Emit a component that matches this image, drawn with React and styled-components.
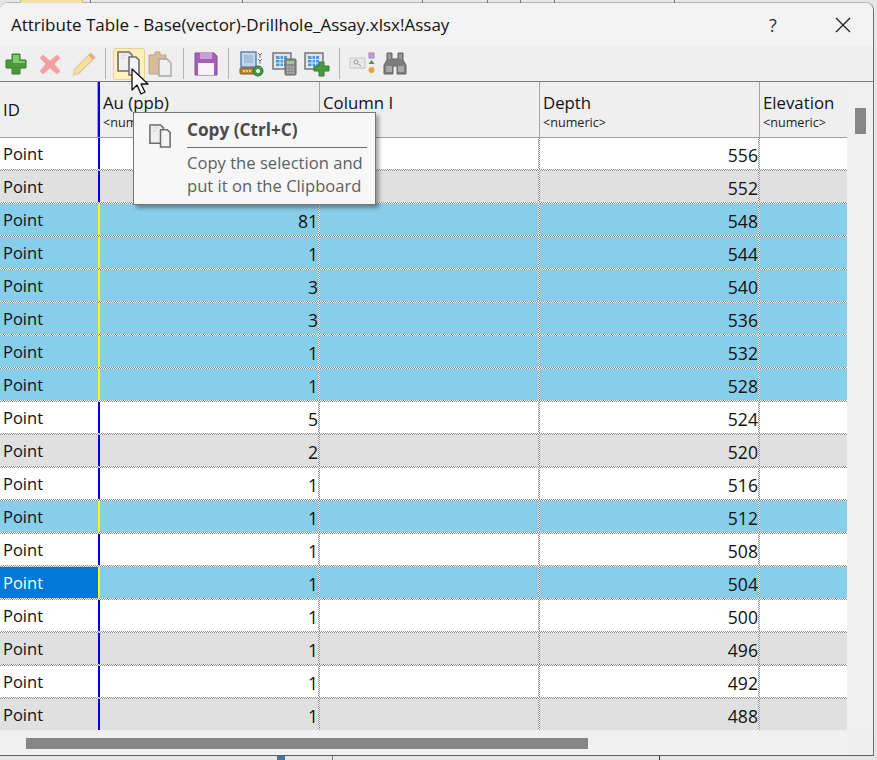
import React from "react";
import styled, { createGlobalStyle } from "styled-components";

const Global = createGlobalStyle`
  html, body { margin: 0; padding: 0; background: #e6e6e6; }
  #root { width: 877px; height: 760px; overflow: hidden; }
`;
const FONT = `"Open Sans", "Noto Sans", sans-serif`;
const CHECK = `repeating-conic-gradient(#8c8c8c 0 25%, #fff 0 50%) 0 0 / 2px 2px`;

const Stage = styled.div`
  position: relative; width: 877px; height: 760px; overflow: hidden;
  padding: 3px 3px 4px 0; box-sizing: border-box;
  font-family: ${FONT}; background: #e6e6e6;
`;
const Win = styled.div`
  position: relative; height: 100%; display: flex; flex-direction: column; box-sizing: border-box;
  border-right: 1px solid #707070; border-bottom: 1px solid #5f5f5f;
  border-top-right-radius: 8px; border-top-left-radius: 8px; background: #efefef; overflow: hidden;
`;
const WinHalo = styled.div`
  height: 100%; border-top-left-radius: 8px; border-top-right-radius: 8px; box-shadow: 0 -1px 0 #b4b4b4;
`;
const Title = styled.div`
  height: 43px; display: flex; align-items: center; background: #f3f3f3; padding-left: 11px;
  font-size: 17px; color: #111; flex: none;
`;
const TitleText = styled.div` flex: 1; white-space: nowrap; `;
const Help = styled.div` width: 18px; margin-right: 48px; font-size: 18px; color: #333; `;
const Close = styled.svg` width: 16px; height: 16px; margin-right: 22px; `;
const Toolbar = styled.div`
  height: 35px; display: flex; align-items: center; background: #efefef; flex: none;
`;
const Tool = styled.div`
  width: 32px; height: 32px; margin-right: ${p => p.$gap ?? 0}px; display: flex; align-items: center; justify-content: center;
  box-sizing: border-box; border-radius: 3px; flex: none;
  ${p => p.$active && `background: linear-gradient(#fdeeb8, #fff2c4); border: 1px solid #ecd184;`}
  svg { filter: blur(.35px); }
`;
const Sep = styled.div` width: 1px; height: 31px; background: #b4b4b4; flex: none; margin: 0 ${p => p.$r}px 0 ${p => p.$l}px; `;
const Body = styled.div`
  flex: 1; min-height: 0; display: grid; grid-template-columns: 847px 26px; grid-template-rows: 648px 1fr;
  border-top: 1px solid #7d7d7d;
`;
const Table = styled.div` overflow: hidden; background: #fff; `;
const COLS = `98px 2px 220px 220px 220px 87px`;
const Head = styled.div`
  height: 56px; display: grid; grid-template-columns: ${COLS}; background: #efefef;
  border-bottom: 1px solid #a0a0a0; box-sizing: border-box;
`;
const HeadCell = styled.div`
  box-sizing: border-box; padding: 10px 0 0 3px; border-right: ${p => p.$last ? "none" : "1px solid #a4a4a4"};
  overflow: hidden; white-space: nowrap; color: #111; font-size: 16.8px; line-height: 22px;
  ${p => p.$center && `display: flex; align-items: center; padding-top: 0;`}
`;
const Sub = styled.div` font-size: 12.6px; line-height: 16px; margin-top: 1px; color: #222; `;
const BlueBar = styled.div` background: #0000e0; `;
const Row = styled.div`
  height: 33px; box-sizing: border-box; display: grid; grid-template-columns: ${COLS};
  background: ${p => p.$sel ? "#87ceeb" : p.$odd ? "#e0e0e0" : "#fff"};
  position: relative; color: #111; font-size: 16.5px;
  &::after {
    content: ""; position: absolute; left: 0; right: 0; bottom: 0; height: 2px;
    background: ${CHECK};
  }
`;
const IdCell = styled.div`
  padding: 5px 0 0 3px; line-height: 22px;
  ${p => p.$cur && `background: #0078d7; color: #fff;`}
`;
const Mark = styled.div` background: ${p => p.$sel ? "#ffff00" : "#0000e0"}; `;
const Num = styled.div`
  position: relative; box-sizing: border-box; text-align: right; padding: 6px 2px 0 0; line-height: 23px; font-size: 17.6px;
  &::after { content: ""; position: absolute; right: 0; top: 0; bottom: 0; width: 2px; background: ${CHECK}; }
`;
const VBar = styled.div` background: #f0f0f0; padding: 26px 0 0 8px; box-sizing: border-box; `;
const VThumb = styled.div` width: 11px; height: 26px; background: #868686; `;
const HBar = styled.div` background: #f0f0f0; padding: 8px 0 0 26px; `;
const HThumb = styled.div` width: 562px; height: 11px; background: #868686; `;
const Corner = styled.div` background: #efefef; `;
const Tip = styled.div`
  position: absolute; left: 133px; top: 112px; width: 243px; height: 93px; box-sizing: border-box;
  background: #f7f7f7; border: 1px solid #767676; box-shadow: 3px 3px 4px rgba(0,0,0,.35);
  display: grid; grid-template-columns: 53px 1fr; padding: 0 8px 0 0; color: #5f5f5f;
`;
const TipIcon = styled.div` padding: 11px 0 0 14px; svg { filter: blur(.3px); } `;
const TipTitle = styled.div`
  font-weight: 700; font-size: 17.2px; line-height: 22px; padding: 6px 0 6px; border-bottom: 1px solid #6e6e6e; color: #4b4b4b; white-space: nowrap;
`;
const TipText = styled.div` font-size: 16.6px; line-height: 23px; padding-top: 3px; white-space: nowrap; `;
const Cursor = styled.svg` position: absolute; left: 130px; top: 68px; width: 20px; height: 28px; `;
const TopTab = styled.div` position: absolute; left: 20px; top: 0; width: 63px; height: 3px; box-sizing: border-box; background: #f0e2a8; border: solid #cdbb74; border-width: 0 1px; `;
const Tick = styled.div`
  position: absolute; left: ${p => p.$x}px; ${p => p.$bottom ? "bottom: 0;" : "top: 0;"} width: ${p => p.$w ?? 1}px; height: ${p => p.$bottom ? 4 : 3}px; background: ${p => p.$c ?? "#777"};
`;

const Plus = () => (
  <svg width="24" height="24" viewBox="0 0 24 24"><path d="M8 2h8v6h6v8h-6v6H8v-6H2V8h6z" fill="#4a9a3c" stroke="#3a7a34" strokeWidth="1" /><path d="M9 3h6v6h6v2H9z" fill="#7fc96e" /></svg>
);
const XIcon = () => (
  <svg width="24" height="24" viewBox="0 0 24 24"><path d="M5 3l7 6 7-6 3 3-6 6 6 7-3 3-7-6-7 6-3-3 6-7-6-6z" fill="#f5a0a0" stroke="#f0b0b0" /></svg>
);
const Pencil = () => (
  <svg width="26" height="26" viewBox="0 0 24 24"><path d="M18 2l4 4L7 21l-5 1 1-5z" fill="#f5e09c" stroke="#d2c49a" /><path d="M18 2l4 4-2 2-4-4z" fill="#eba884" /><path d="M3 17l4 4-5 1z" fill="#e8d6b4" /></svg>
);
const Sheets = ({ size = 26 }) => (
  <svg width={size} height={size} viewBox="0 0 26 26">
    <path d="M2 1h11l3 3v16H2z" fill="#efefef" stroke="#6d6d6d" strokeWidth="1.6" />
    <path d="M13 6h7l3 3v15H13z" fill="#f4f4f4" stroke="#6d6d6d" strokeWidth="1.6" />
    <path d="M5 4h6M5 7h4" stroke="#cfcfcf" />
  </svg>
);
const Paste = () => (
  <svg width="26" height="26" viewBox="0 0 26 26">
    <path d="M1 4h6V1h5v3h6v19H1z" fill="#d8bd98" stroke="#bda785" />
    <path d="M11 8h8l4 4v13H11z" fill="#efefef" stroke="#a8a8a8" strokeWidth="1.4" />
  </svg>
);
const Save = () => (
  <svg width="24" height="24" viewBox="0 0 24 24">
    <path d="M1 1h19l3 3v19H1z" fill="#a261b4" stroke="#8a4d9c" />
    <rect x="6" y="1" width="12" height="6" fill="#c9a0d4" />
    <rect x="4" y="11" width="16" height="12" fill="#f8f2fa" />
  </svg>
);
const XyTool = () => (
  <svg width="26" height="26" viewBox="0 0 26 26">
    <rect x="2" y="1" width="15" height="15" fill="#c6d6ea" stroke="#5a86b8" strokeWidth="1.5" />
    <rect x="5" y="4" width="9" height="8" fill="#a6bfe0" />
    <rect x="1" y="17" width="16" height="6" rx="1" fill="#b98a34" stroke="#7d5c20" />
    <path d="M4 20h9" stroke="#f1e3b8" strokeDasharray="2 1" strokeWidth="1.5" />
    <circle cx="19" cy="20" r="5" fill="#3f9a4a" stroke="#2c7035" />
    <circle cx="19" cy="20" r="2" fill="#fff" />
    <path d="M19 2l2 2 2-2M21 4v3M19 8l2 2 2-2M21 10v3" stroke="#777" fill="none" />
  </svg>
);
const Grid = () => (
  <g>
    <rect x="1" y="2" width="18" height="16" fill="#e4e4e4" stroke="#777" strokeWidth="1.5" />
    <rect x="4" y="5" width="11" height="10" fill="#4d9bd8" />
    <path d="M4 8.500h11M4 12h11M8 5v10M11.500 5v10" stroke="#d9ebf7" />
  </g>
);
const Calc = () => (
  <svg width="26" height="26" viewBox="0 0 26 26">
    <Grid />
    <rect x="13" y="8" width="11" height="16" rx="1" fill="#8a8a8a" stroke="#666" />
    <rect x="15" y="10" width="7" height="3" fill="#8fd08f" />
    <path d="M15 16h7M15 19h7M15 22h7" stroke="#ddd" strokeDasharray="1.500 1.200" />
  </svg>
);
const AddGrid = () => (
  <svg width="26" height="26" viewBox="0 0 26 26">
    <Grid />
    <path d="M15 11h5v4h5v5h-5v5h-5v-5h-5v-5h5z" fill="#4a9a3c" stroke="#3a7a34" />
  </svg>
);
const Query = () => (
  <svg width="26" height="26" viewBox="0 0 26 26">
    <path d="M1 7h15v10H1z" fill="#e8e8e8" stroke="#c4c4c4" />
    <circle cx="7" cy="11" r="2" fill="none" stroke="#999" />
    <path d="M9 13l3 2" stroke="#999" />
    <rect x="20" y="2" width="5" height="5" fill="#c29ce0" stroke="#a880c8" />
    <path d="M22.500 9l3 4h-6z" fill="#4a9a3c" />
    <circle cx="22.500" cy="19" r="3" fill="#eda03c" />
  </svg>
);
const Binoc = () => (
  <svg width="26" height="26" viewBox="0 0 26 26">
    <path d="M5 2h5v6h6V2h5v7l3 5v9h-9v-8h-4v8H2v-9l3-5z" fill="#7d7d7d" stroke="#666" />
    <path d="M4 15h6v6H4zM16 15h6v6h-6z" fill="#a8a8a8" />
    <path d="M6 3h3v5H6zM17 3h3v5h-3z" fill="#9a9a9a" />
  </svg>
);

const depths = [556,552,548,544,540,536,532,528,524,520,516,512,508,504,500,496,492,488];
const aus = ["", "", 81,1,3,3,1,1,5,2,1,1,1,1,1,1,1,1];
const selected = new Set([2,3,4,5,6,7,11,13]);
const odd = new Set([1,9,15,17]);
const topTicks = [90, 242, 422, 487, 520, 554, 674];

export default function App() {
  return (
    <Stage>
      <Global />
      <TopTab />
      {topTicks.map(x => <Tick key={x} $x={x} />)}
      <Tick $bottom $x={277} $w={8} $c="#3a78b0" />
      <Tick $bottom $x={332} />
      <Tick $bottom $x={659} $c="#333" />
      <WinHalo>
      <Win>
        <Title>
          <TitleText>Attribute Table - Base(vector)-Drillhole_Assay.xlsx!Assay</TitleText>
          <Help>?</Help>
          <Close viewBox="0 0 16 16"><path d="M1 1l14 14M15 1L1 15" stroke="#222" strokeWidth="1.3" /></Close>
        </Title>
        <Toolbar>
          <Tool $gap={2}><Plus /></Tool>
          <Tool $gap={2}><XIcon /></Tool>
          <Tool><Pencil /></Tool>
          <Sep $l={5} $r={7} />
          <Tool $active><Sheets /></Tool>
          <Tool><Paste /></Tool>
          <Sep $l={6} $r={6} />
          <Tool><Save /></Tool>
          <Sep $l={6} $r={7} />
          <Tool $gap={1}><XyTool /></Tool>
          <Tool><Calc /></Tool>
          <Tool><AddGrid /></Tool>
          <Sep $l={6} $r={6} />
          <Tool $gap={1}><Query /></Tool>
          <Tool><Binoc /></Tool>
        </Toolbar>
        <Body>
          <Table>
            <Head>
              <HeadCell $center>ID</HeadCell>
              <BlueBar />
              <HeadCell>Au (ppb)<Sub>&lt;numeric&gt;</Sub></HeadCell>
              <HeadCell>Column I</HeadCell>
              <HeadCell>Depth<Sub>&lt;numeric&gt;</Sub></HeadCell>
              <HeadCell $last>Elevation<Sub>&lt;numeric&gt;</Sub></HeadCell>
            </Head>
            {depths.map((d, i) => {
              const sel = selected.has(i);
              return (
                <Row key={d} $sel={sel} $odd={odd.has(i)}>
                  <IdCell $cur={i === 13}>Point</IdCell>
                  <Mark $sel={sel} />
                  <Num>{aus[i]}</Num>
                  <Num />
                  <Num>{d}</Num>
                  <div />
                </Row>
              );
            })}
          </Table>
          <VBar><VThumb /></VBar>
          <HBar><HThumb /></HBar>
          <Corner />
        </Body>
      </Win>
      </WinHalo>
      <Tip>
        <TipIcon><Sheets size={25} /></TipIcon>
        <div>
          <TipTitle>Copy (Ctrl+C)</TipTitle>
          <TipText>Copy the selection and<br />put it on the Clipboard</TipText>
        </div>
      </Tip>
      <Cursor viewBox="0 0 20 28">
        <path d="M2 1v21l5-5 4 9 4-2-4-8h7z" fill="#fff" stroke="#111" strokeWidth="1.300" strokeLinejoin="round" />
      </Cursor>
    </Stage>
  );
}
